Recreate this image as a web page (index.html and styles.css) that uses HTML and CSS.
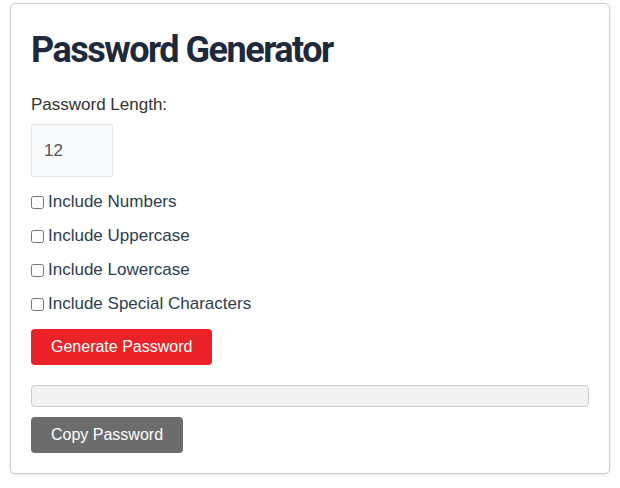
FILE: index.html
```html
<!DOCTYPE html>
<html lang="en">
<head>
    <meta charset="UTF-8">
    <meta name="viewport" content="width=device-width, initial-scale=1.0">
    <title>Password Generator</title>
    <link rel="stylesheet" href="styles.css">
</head>
<body>
    <div class="card">
        <h1>Password Generator</h1>

        <div class="length-group">
            <label for="length">Password Length:</label>
            <input type="number" id="length" min="4" max="64" value="12">
        </div>

        <div class="option">
            <input type="checkbox" id="numbers">
            <label for="numbers">Include Numbers</label>
        </div>
        <div class="option">
            <input type="checkbox" id="uppercase">
            <label for="uppercase">Include Uppercase</label>
        </div>
        <div class="option">
            <input type="checkbox" id="lowercase">
            <label for="lowercase">Include Lowercase</label>
        </div>
        <div class="option">
            <input type="checkbox" id="special">
            <label for="special">Include Special Characters</label>
        </div>

        <button class="btn-generate" id="generate">Generate Password</button>

        <div class="output" id="output"></div>

        <button class="btn-copy" id="copy">Copy Password</button>
    </div>
</body>
</html>
```

FILE: styles.css
```css
body {
    font-family: Arial, "Liberation Sans", sans-serif;
    margin: 0;
    padding: 3px 10px;
    background-color: #fff;
}
.card {
    border: 1px solid #cfcfcf;
    border-radius: 5px;
    padding: 20px;
    box-shadow: 0 1px 3px rgba(0,0,0,0.12);
}
h1 {
    font-family: Roboto, sans-serif;
    font-weight: 700;
    font-size: 36px;
    letter-spacing: -1.5px;
    color: #1e293b;
    margin: 5px 0 23px;
    line-height: 1.2;
}
.length-group label {
    display: block;
    font-size: 17px;
    color: #333;
    margin-bottom: 9px;
}
.length-group input {
    width: 82px;
    height: 53px;
    box-sizing: border-box;
    padding: 0 12px;
    font-family: Arial, "Liberation Sans", sans-serif;
    font-size: 17px;
    color: #555;
    background-color: #f7f9fb;
    border: 1px solid #e2e6ea;
    border-radius: 2px;
    -moz-appearance: textfield;
}
.length-group input::-webkit-inner-spin-button,
.length-group input::-webkit-outer-spin-button {
    -webkit-appearance: none;
    margin: 0;
}
.length-group {
    margin-bottom: 15px;
}
.option {
    display: flex;
    align-items: center;
    gap: 4px;
    height: 20px;
    margin-bottom: 14px;
    font-size: 17px;
    color: #2c3e50;
}
.option input {
    margin: 0;
    width: 13px;
    height: 13px;
}
button {
    font-family: Arial, "Liberation Sans", sans-serif;
    font-size: 16px;
    color: #fff;
    border: none;
    border-radius: 4px;
    padding: 9px 20px;
    line-height: 18px;
    cursor: pointer;
}
.btn-generate {
    background-color: #e92328;
    margin-top: 1px;
}
.btn-generate:hover {
    background-color: #c81c21;
}
.output {
    margin-top: 20px;
    height: 20px;
    background-color: #f1f1f1;
    border: 1px solid #ccc;
    border-radius: 4px;
}
.btn-copy {
    background-color: #6c6c6c;
    margin-top: 10px;
    padding: 9px 20px;
}
.btn-copy:hover {
    background-color: #555;
}
```
